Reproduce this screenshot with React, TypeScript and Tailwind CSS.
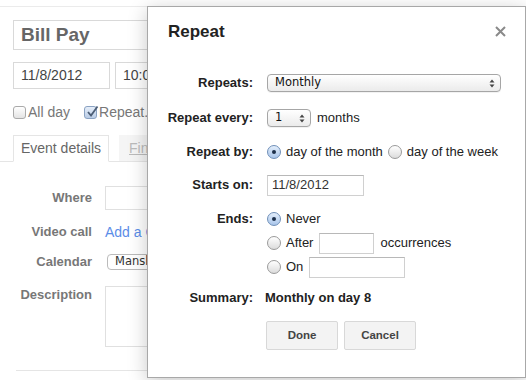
import React from 'react';

function MacSelect({ value, className }: { value: string; className: string }) {
  return (
    <div
      className={`flex items-center justify-between rounded-[4px] border border-[#a6a6a6] bg-gradient-to-b from-white to-[#ebebeb] pl-[7px] pr-[5px] shadow-[0_1px_0_rgba(0,0,0,0.05)] ${className}`}
    >
      <span className="text-[11.5px] text-[#111] font-['DejaVu_Sans',sans-serif] leading-none">{value}</span>
      <svg width="6" height="9" viewBox="0 0 6 9">
        <path d="M3 0.5 L5.5 3.5 L0.5 3.5 Z" fill="#444" />
        <path d="M3 8.5 L5.5 5.5 L0.5 5.5 Z" fill="#444" />
      </svg>
    </div>
  );
}

function Radio({ checked, className = '' }: { checked?: boolean; className?: string }) {
  return checked ? (
    <span
      className={`flex h-[14px] w-[14px] shrink-0 items-center justify-center rounded-full border border-[#6f8fb8] bg-gradient-to-b from-[#e3eefb] to-[#a9c5ea] ${className}`}
    >
      <span className="h-[4px] w-[4px] rounded-full bg-[#1c2f4a]" />
    </span>
  ) : (
    <span
      className={`block h-[14px] w-[14px] shrink-0 rounded-full border border-[#9a9a9a] bg-gradient-to-b from-white to-[#dcdcdc] ${className}`}
    />
  );
}

function Row({ label, children, className = '' }: { label: string; children: React.ReactNode; className?: string }) {
  return (
    <div className={`grid grid-cols-[105px_1fr] gap-x-[14px] items-center h-6 ${className}`}>
      <span className="text-right text-[13px] font-bold text-[#222]">{label}</span>
      <div className="flex items-center">{children}</div>
    </div>
  );
}

function PageLabel({ children }: { children: React.ReactNode }) {
  return <span className="text-right text-[13px] font-bold text-[#777]">{children}</span>;
}

export default function App() {
  return (
    <div className="relative h-[380px] w-[526px] overflow-hidden bg-white font-['Liberation_Sans',Arial,sans-serif]">
      {/* page behind the dialog, only the part left of it shows */}
      <div className="w-[148px] overflow-hidden">
        <div className="w-[400px]">
          <div className="mt-[6px] border-t border-[#ebebeb]" />
          <div className="ml-[13px] mt-[13px] flex h-[30px] w-[300px] items-center border border-[#d9d9d9] pl-[7px] text-[19px] font-bold text-[#666]">
            Bill Pay
          </div>
          <div className="ml-[13px] mt-[12px] flex gap-[5px]">
            <div className="flex h-[27px] w-[97px] items-center border border-[#d9d9d9] pl-[7px] text-[14px] text-[#444]">11/8/2012</div>
            <div className="flex h-[27px] w-[80px] items-center border border-[#d9d9d9] pl-[7px] text-[14px] text-[#444]">10:00</div>
          </div>
          <div className="ml-[13px] mt-[15px] flex h-4 items-center whitespace-nowrap text-[14px] text-[#777]">
            <span className="h-[13px] w-[13px] rounded-[3px] border border-[#aaa] bg-gradient-to-b from-white to-[#e4e4e4]" />
            <span className="ml-[2px]">All day</span>
            <span className="relative ml-[14px] h-[13px] w-[13px] rounded-[3px] border border-[#8aa2c2] bg-gradient-to-b from-[#e6eef9] to-[#b9cce6]">
              <svg className="absolute -top-[2px] left-[1px]" width="13" height="13" viewBox="0 0 13 13">
                <path d="M2 7 L5 10.5 L11.5 1.5" fill="none" stroke="#4b5d75" strokeWidth="1.8" />
              </svg>
            </span>
            <span className="ml-[2px]">Repeat...</span>
          </div>
          <div className="mt-[15px] flex h-[27px] items-end border-b border-[#e5e5e5] pl-[13px] text-[14px] whitespace-nowrap">
            <div className="-mb-px flex h-[27px] w-[96px] items-center justify-center border border-b-white border-[#e5e5e5] bg-white text-[#666]">
              Event details
            </div>
            <div className="ml-[10px] flex h-[26px] w-[100px] items-center bg-[#f5f5f5] pl-[10px] text-[#bbb] underline">Fin</div>
          </div>
          <div className="mt-[24px] grid grid-cols-[92px_1fr] gap-x-[13px] items-center">
            <PageLabel>Where</PageLabel>
            <div className="h-6 w-[200px] border border-[#e0e0e0]" />
          </div>
          <div className="mt-[10px] grid grid-cols-[92px_1fr] gap-x-[13px] items-center h-6 whitespace-nowrap">
            <PageLabel>Video call</PageLabel>
            <span className="text-[14px] text-[#5b8de8]">Add a G</span>
          </div>
          <div className="mt-[8px] grid grid-cols-[92px_1fr] gap-x-[13px] items-center h-4">
            <PageLabel>Calendar</PageLabel>
            <div className="ml-[2px] flex h-[16px] w-[100px] items-center rounded-[4px] border border-[#bbb] pl-[7px] text-[11.5px] text-[#333] font-['DejaVu_Sans',sans-serif]">
              Mansh
            </div>
          </div>
          <div className="mt-[18px] grid grid-cols-[92px_1fr] gap-x-[13px] items-start">
            <span className="mt-[-1px] text-right text-[13px] font-bold text-[#777]">Description</span>
            <div className="h-[61px] w-[200px] border border-[#e0e0e0]" />
          </div>
          <div className="ml-[16px] mt-[23px] border-t border-[#e5e5e5]" />
        </div>
      </div>

      {/* repeat dialog */}
      <div className="absolute left-[147px] top-[6px] h-[372px] w-[379px] border border-[#a8a8a8] bg-white shadow-[0_4px_18px_rgba(0,0,0,0.22)]">
        <div className="flex h-[49px] items-center justify-between pl-[20px] pr-[19px]">
          <span className="text-[17px] font-bold text-[#222]">Repeat</span>
          <svg width="11" height="11" viewBox="0 0 11 11">
            <path d="M1 1 L10 10 M10 1 L1 10" stroke="#8a8a8a" strokeWidth="2" />
          </svg>
        </div>

        <Row label="Repeats:" className="mt-[15px]">
          <MacSelect value="Monthly" className="h-[18px] w-[234px]" />
        </Row>
        <Row label="Repeat every:" className="mt-[11px]">
          <MacSelect value="1" className="h-[18px] w-[44px]" />
          <span className="ml-[6px] text-[13px] text-[#222]">months</span>
        </Row>
        <Row label="Repeat by:" className="mt-[10px]">
          <Radio checked />
          <span className="ml-[5px] text-[13px] text-[#222]">day of the month</span>
          <Radio className="ml-[5px]" />
          <span className="ml-[5px] text-[13px] text-[#222]">day of the week</span>
        </Row>
        <Row label="Starts on:" className="mt-[9px]">
          <div className="flex h-[21px] w-[97px] items-center border border-[#d0d0d0] border-t-[#b8b8b8] pl-[4px] text-[13px] text-[#333]">
            11/8/2012
          </div>
        </Row>

        <div className="mt-[10px] grid grid-cols-[105px_1fr] gap-x-[14px]">
          <span className="flex h-6 items-center justify-end text-[13px] font-bold text-[#222]">Ends:</span>
          <div className="flex flex-col">
            <div className="flex h-6 items-center">
              <Radio checked />
              <span className="ml-[5px] text-[13px] text-[#222]">Never</span>
            </div>
            <div className="flex h-6 items-center">
              <Radio />
              <span className="ml-[5px] text-[13px] text-[#222]">After</span>
              <div className="ml-[6px] h-[21px] w-[55px] border border-[#d0d0d0] border-t-[#b8b8b8]" />
              <span className="ml-[6px] text-[13px] text-[#222]">occurrences</span>
            </div>
            <div className="flex h-6 items-center">
              <Radio />
              <span className="ml-[5px] text-[13px] text-[#222]">On</span>
              <div className="ml-[6px] h-[21px] w-[96px] border border-[#d0d0d0] border-t-[#b8b8b8]" />
            </div>
          </div>
        </div>

        <Row label="Summary:" className="mt-[7px]">
          <span className="-ml-[2px] text-[13px] font-bold text-[#222]">Monthly on day 8</span>
        </Row>

        <div className="ml-[118px] mt-[11px] flex gap-[6px]">
          <button className="h-[29px] w-[72px] rounded-[2px] border border-[#d8d8d8] bg-[#f3f3f3] text-[11.5px] font-bold text-[#444]">
            Done
          </button>
          <button className="h-[29px] w-[72px] rounded-[2px] border border-[#d8d8d8] bg-[#f3f3f3] text-[11.5px] font-bold text-[#444]">
            Cancel
          </button>
        </div>
      </div>
    </div>
  );
}
